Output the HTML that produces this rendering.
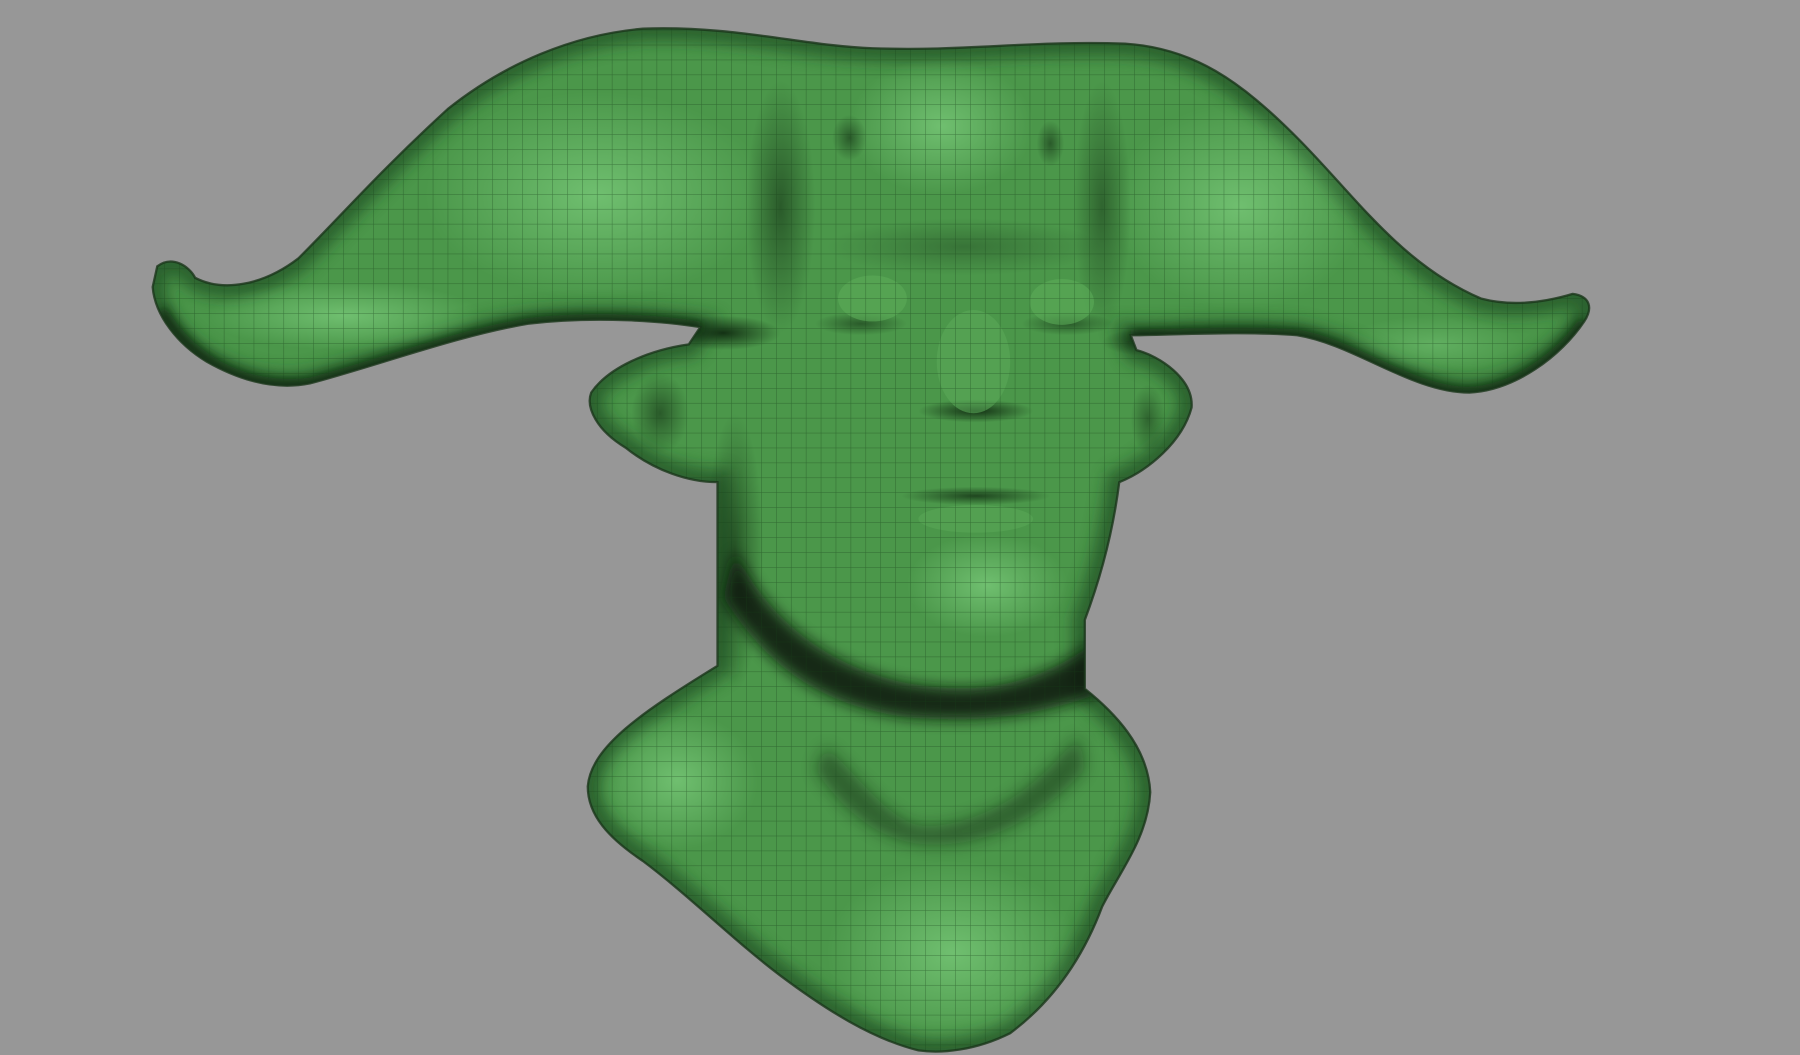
<!DOCTYPE html>
<html><head><meta charset="utf-8"><style>
html,body{margin:0;padding:0;background:#979797;width:1800px;height:1055px;overflow:hidden}
svg{display:block}
</style></head><body>
<svg width="1800" height="1055" viewBox="0 0 1568 919" preserveAspectRatio="none" xmlns="http://www.w3.org/2000/svg">
<defs>
<radialGradient id="hl" cx="50%" cy="50%" r="50%">
<stop offset="0" stop-color="#76c676" stop-opacity="0.85"/><stop offset="1" stop-color="#76c676" stop-opacity="0"/>
</radialGradient>
<radialGradient id="sh" cx="50%" cy="50%" r="50%">
<stop offset="0" stop-color="#0a200b" stop-opacity="0.85"/><stop offset="1" stop-color="#0a200b" stop-opacity="0"/>
</radialGradient>
<pattern id="mesh" width="13" height="13" patternUnits="userSpaceOnUse">
<path d="M0 0H13M0 0V13" stroke="#163d17" stroke-width="0.9" opacity="0.5" fill="none"/>
</pattern>
<filter id="blur" x="-50%" y="-50%" width="200%" height="200%"><feGaussianBlur stdDeviation="7"/></filter>
<filter id="blur2" x="-50%" y="-50%" width="200%" height="200%"><feGaussianBlur stdDeviation="6"/></filter>
<filter id="blur3" x="-50%" y="-50%" width="200%" height="200%"><feGaussianBlur stdDeviation="4"/></filter>
<clipPath id="body"><path d="
M137 232 C150 222 165 232 170 242 C195 255 230 248 260 225 C300 185 330 150 390 95 C440 55 500 30 560 25 C640 22 700 40 760 42 C840 45 900 35 980 38 C1040 42 1080 70 1130 120 C1180 170 1220 230 1290 260 C1320 268 1350 262 1370 256 C1385 258 1388 268 1380 280 C1360 310 1320 340 1280 342 C1230 342 1180 300 1130 292 C1080 288 1020 292 985 292
L990 305 C1010 310 1040 330 1038 355 C1030 385 1000 410 975 420
C970 460 960 500 945 540 L945 600 C970 620 1000 650 1002 690 C1000 730 975 760 960 790 C945 830 920 870 880 900 C850 915 820 918 800 915 C760 905 720 880 680 850 C640 820 600 780 560 750 C530 730 512 710 512 685 C515 650 560 620 625 580 L625 420 C600 420 570 410 545 390 C520 375 510 355 515 342 C530 320 565 305 600 300 L610 285 C580 280 520 275 460 282 C400 292 330 318 270 334 C240 340 210 332 180 315 C155 300 135 275 133 250 Z"/></clipPath>
</defs>
<g clip-path="url(#body)">
<rect width="1568" height="919" fill="#4b974a"/>
<path fill="none" stroke="#1f4a20" stroke-width="22" opacity="0.7" filter="url(#blur)" d="
M137 232 C150 222 165 232 170 242 C195 255 230 248 260 225 C300 185 330 150 390 95 C440 55 500 30 560 25 C640 22 700 40 760 42 C840 45 900 35 980 38 C1040 42 1080 70 1130 120 C1180 170 1220 230 1290 260 C1320 268 1350 262 1370 256 C1385 258 1388 268 1380 280 C1360 310 1320 340 1280 342 C1230 342 1180 300 1130 292 C1080 288 1020 292 985 292
L990 305 C1010 310 1040 330 1038 355 C1030 385 1000 410 975 420
C970 460 960 500 945 540 L945 600 C970 620 1000 650 1002 690 C1000 730 975 760 960 790 C945 830 920 870 880 900 C850 915 820 918 800 915 C760 905 720 880 680 850 C640 820 600 780 560 750 C530 730 512 710 512 685 C515 650 560 620 625 580 L625 420 C600 420 570 410 545 390 C520 375 510 355 515 342 C530 320 565 305 600 300 L610 285 C580 280 520 275 460 282 C400 292 330 318 270 334 C240 340 210 332 180 315 C155 300 135 275 133 250 Z"/>
<ellipse cx="520" cy="170" rx="150" ry="90" fill="url(#hl)"/>
<ellipse cx="1080" cy="180" rx="110" ry="90" fill="url(#hl)"/>
<ellipse cx="820" cy="110" rx="80" ry="60" fill="url(#hl)"/>
<ellipse cx="860" cy="510" rx="70" ry="45" fill="url(#hl)"/>
<ellipse cx="830" cy="830" rx="110" ry="80" fill="url(#hl)"/>
<ellipse cx="590" cy="680" rx="70" ry="60" fill="url(#hl)"/>
<ellipse cx="300" cy="275" rx="120" ry="30" fill="url(#hl)"/>
<ellipse cx="1250" cy="300" rx="80" ry="25" fill="url(#hl)" opacity="0.6"/>
<ellipse cx="680" cy="180" rx="30" ry="110" fill="url(#sh)" opacity="0.6"/>
<ellipse cx="960" cy="180" rx="25" ry="110" fill="url(#sh)" opacity="0.5"/>
<ellipse cx="640" cy="480" rx="25" ry="120" fill="url(#sh)" opacity="0.6"/>
<ellipse cx="630" cy="290" rx="50" ry="15" fill="url(#sh)"/>
<ellipse cx="1000" cy="298" rx="40" ry="12" fill="url(#sh)" opacity="0.7"/>
<ellipse cx="850" cy="358" rx="50" ry="10" fill="url(#sh)"/>
<ellipse cx="850" cy="432" rx="65" ry="8" fill="url(#sh)" opacity="0.8"/>
<ellipse cx="750" cy="282" rx="40" ry="10" fill="url(#sh)" opacity="0.6"/>
<ellipse cx="930" cy="282" rx="40" ry="10" fill="url(#sh)" opacity="0.6"/>
<ellipse cx="575" cy="360" rx="25" ry="35" fill="url(#sh)" opacity="0.6"/>
<ellipse cx="1000" cy="365" rx="15" ry="30" fill="url(#sh)" opacity="0.5"/>
<ellipse cx="740" cy="120" rx="15" ry="20" fill="url(#sh)" opacity="0.6"/>
<ellipse cx="915" cy="125" rx="12" ry="20" fill="url(#sh)" opacity="0.6"/>
<ellipse cx="840" cy="215" rx="120" ry="25" fill="url(#sh)" opacity="0.35"/>
<path d="M640 480 C670 540 720 580 790 595 C850 605 900 600 960 555 L955 605 C900 625 850 630 790 625 C720 615 670 585 630 520 Z" fill="#081808" opacity="0.85" filter="url(#blur2)"/>
<path d="M720 650 C760 690 780 720 810 720 C860 715 900 690 940 640 L945 670 C900 720 850 740 800 735 C760 730 730 700 710 670 Z" fill="#0b1d0b" opacity="0.45" filter="url(#blur)"/>
<ellipse cx="848" cy="315" rx="32" ry="45" fill="#5aa858" opacity="0.6"/>
<ellipse cx="760" cy="260" rx="30" ry="20" fill="#5bab59" opacity="0.6"/>
<ellipse cx="925" cy="263" rx="28" ry="20" fill="#5bab59" opacity="0.6"/>
<ellipse cx="850" cy="452" rx="50" ry="12" fill="#5fae5d" opacity="0.4"/>
<path d="M140 270 C170 320 220 340 270 334 C330 318 400 292 460 282 C520 275 580 280 610 285" fill="none" stroke="#0c220c" stroke-width="10" opacity="0.8" filter="url(#blur3)"/>
<path d="M985 292 C1020 292 1080 288 1130 292 C1180 300 1230 342 1280 342 C1320 340 1360 310 1380 280" fill="none" stroke="#0c220c" stroke-width="10" opacity="0.8" filter="url(#blur3)"/>
<rect width="1568" height="919" fill="url(#mesh)"/>
</g>
<path fill="none" stroke="#1a361a" stroke-width="2" opacity="0.8" d="
M137 232 C150 222 165 232 170 242 C195 255 230 248 260 225 C300 185 330 150 390 95 C440 55 500 30 560 25 C640 22 700 40 760 42 C840 45 900 35 980 38 C1040 42 1080 70 1130 120 C1180 170 1220 230 1290 260 C1320 268 1350 262 1370 256 C1385 258 1388 268 1380 280 C1360 310 1320 340 1280 342 C1230 342 1180 300 1130 292 C1080 288 1020 292 985 292
L990 305 C1010 310 1040 330 1038 355 C1030 385 1000 410 975 420
C970 460 960 500 945 540 L945 600 C970 620 1000 650 1002 690 C1000 730 975 760 960 790 C945 830 920 870 880 900 C850 915 820 918 800 915 C760 905 720 880 680 850 C640 820 600 780 560 750 C530 730 512 710 512 685 C515 650 560 620 625 580 L625 420 C600 420 570 410 545 390 C520 375 510 355 515 342 C530 320 565 305 600 300 L610 285 C580 280 520 275 460 282 C400 292 330 318 270 334 C240 340 210 332 180 315 C155 300 135 275 133 250 Z"/>
</svg>
</body></html>
